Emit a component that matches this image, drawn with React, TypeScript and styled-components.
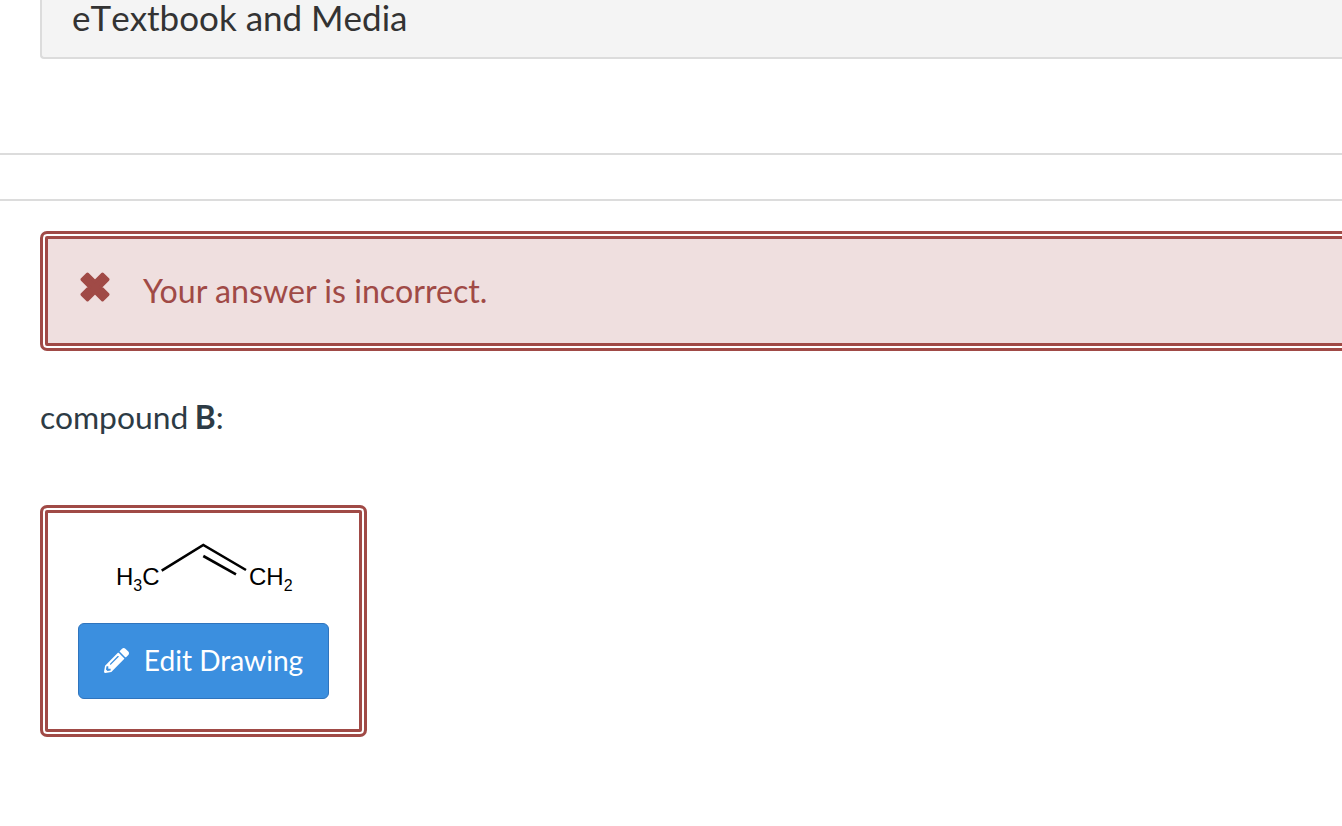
import React from 'react';
import styled, { createGlobalStyle } from 'styled-components';
import { FaPencilAlt } from 'react-icons/fa';

const GlobalStyle = createGlobalStyle`
  html, body {
    margin: 0;
    padding: 0;
    height: 100%;
    overflow: hidden;
    background: #fff;
    font-family: Lato, "Open Sans", sans-serif;
    color: #2d3b45;
  }
`;

const Page = styled.div`
  width: 1342px;
  height: 826px;
  overflow: hidden;
`;

const Section = styled.div`
  padding-left: 40px;
  width: 1400px;
  box-sizing: border-box;
`;

const MediaPanel = styled.div`
  margin-left: 40px;
  height: 59px;
  box-sizing: border-box;
  padding-left: 30px;
  background: #f4f4f4;
  border-left: 2px solid #dcdcdc;
  border-bottom: 2px solid #dcdcdc;
  border-bottom-left-radius: 4px;
  font-size: 35px;
  font-kerning: none;
  line-height: 34px;
  color: #333;
`;

const Divider = styled.hr<{ $top: number }>`
  margin: ${(p) => p.$top}px 0 0;
  height: 2px;
  border: 0;
  background: #dcdcdc;
`;

const Alert = styled.div`
  margin-top: 30px;
  height: 120px;
  box-sizing: border-box;
  display: flex;
  align-items: center;
  padding: 0 0 2px 37px;
  border: 3px solid #a04a46;
  border-radius: 7px;
  box-shadow: inset 0 0 0 2px #fff, inset 0 0 0 5px #a04a46;
  background: #efdfdf;
  color: #a04a46;
  font-size: 32.2px;
`;

const AlertIcon = styled.svg`
  display: block;
  flex: none;
  width: 30px;
  height: 30px;
  margin-right: 33px;
  margin-top: -7px;
  fill: #a04a46;
  stroke: #a04a46;
  stroke-width: 3;
  stroke-linejoin: round;
`;

const Prompt = styled.p`
  margin: 46px 0 0;
  font-size: 31.8px;
  word-spacing: -1.5px;
  line-height: 40px;
`;

const AnswerCard = styled.div`
  margin-top: 68px;
  width: 327px;
  height: 232px;
  box-sizing: border-box;
  padding: 4px 35px 0;
  border: 3px solid #a04a46;
  border-radius: 7px;
  box-shadow: inset 0 0 0 2px #fff, inset 0 0 0 5px #a04a46;
  background: #fff;
`;

const Molecule = styled.svg`
  display: block;
  width: 251px;
  height: 111px;
`;

const AtomLabel = styled.text`
  font-family: "Liberation Sans", Arial, sans-serif;
  font-size: 24px;
  fill: #000;
`;

const EditButton = styled.button`
  display: flex;
  align-items: center;
  justify-content: center;
  gap: 15px;
  width: 251px;
  height: 76px;
  padding: 0 0 2px;
  border: 1px solid #2f74bd;
  border-radius: 6px;
  background: #3b8fdf;
  color: #fff;
  font-family: Lato, sans-serif;
  font-size: 28.1px;
`;

const PencilIcon = styled(FaPencilAlt)`
  width: 25px;
  height: 25px;
`;

const App = () => (
  <Page>
    <GlobalStyle />
    <MediaPanel>eTextbook and Media</MediaPanel>
    <Divider $top={94} />
    <Divider $top={44} />
    <Section>
      <Alert>
        <AlertIcon viewBox="0 0 28 28">
          <path d="M7 2 L14 9 L21 2 L26 7 L19 14 L26 21 L21 26 L14 19 L7 26 L2 21 L9 14 L2 7 Z" />
        </AlertIcon>
        Your answer is incorrect.
      </Alert>
      <Prompt>
        compound <b>B</b>:
      </Prompt>
      <AnswerCard>
        <Molecule viewBox="0 0 251 111">
          <g stroke="#000" strokeWidth="2.6" fill="none">
            <path d="M83.7 58.7 L125.3 33 L168 58" />
            <path d="M125.3 44 L158 62.3" />
          </g>
          <AtomLabel x="38" y="73">
            H<tspan fontSize="16" dy="6">3</tspan>
            <tspan dy="-6">C</tspan>
          </AtomLabel>
          <AtomLabel x="171" y="73">
            CH<tspan fontSize="16" dy="6">2</tspan>
          </AtomLabel>
        </Molecule>
        <EditButton>
          <PencilIcon />
          Edit Drawing
        </EditButton>
      </AnswerCard>
    </Section>
  </Page>
);

export default App;
